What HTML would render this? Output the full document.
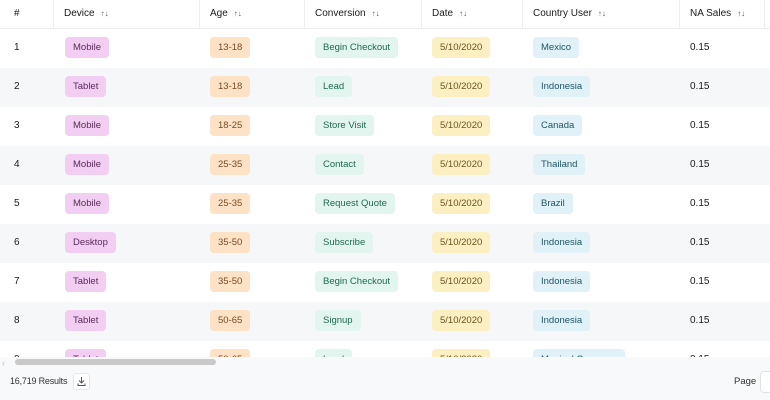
<!DOCTYPE html>
<html><head><style>
*{margin:0;padding:0;box-sizing:border-box}
body{width:770px;height:400px;overflow:hidden;background:#fff;font-family:"Liberation Sans",sans-serif;font-size:10px;color:#1a1a1a;position:relative}
.hd{position:absolute;top:0;left:0;width:770px;height:29px;border-bottom:1px solid #eceef0;background:#fff}
.hd div{position:absolute;top:0;height:28px;line-height:28px;border-right:1px solid #eceef0;padding-left:10px}
.hd span{color:#555;font-size:8px;margin-left:6px}
.row{position:absolute;left:0;width:770px;height:39px}
.row.alt{background:#f6f7f9}
.c{position:absolute;top:0;height:38px;line-height:38px}
.p{position:absolute;top:8px;height:21px;line-height:21px;padding:0 8px;border-radius:4px;font-size:9.5px;white-space:nowrap}
.dv{background:#f2cff2;color:#5b2a5b}
.ag{background:#fde2c6;color:#7a4a22}
.cv{background:#e2f5ee;color:#1f6a4f}
.dt{background:#fcefc2;color:#6a5320}
.ct{background:#e0f2f7;color:#1f5566}
.foot{position:absolute;left:0;top:357px;width:770px;height:43px;background:#f8f9fa}
</style></head><body>
<div class="hd">
<div style="left:0;width:54px;padding-left:14px">#</div>
<div style="left:54px;width:146px">Device<span>↑↓</span></div>
<div style="left:200px;width:105px">Age<span>↑↓</span></div>
<div style="left:305px;width:117px">Conversion<span>↑↓</span></div>
<div style="left:422px;width:101px">Date<span>↑↓</span></div>
<div style="left:523px;width:157px">Country User<span>↑↓</span></div>
<div style="left:680px;width:85px">NA Sales<span>↑↓</span></div>
</div>
<div id="rows"></div>
<script>
var d=[["Mobile","13-18","Begin Checkout","Mexico"],["Tablet","13-18","Lead","Indonesia"],["Mobile","18-25","Store Visit","Canada"],["Mobile","25-35","Contact","Thailand"],["Mobile","25-35","Request Quote","Brazil"],["Desktop","35-50","Subscribe","Indonesia"],["Tablet","35-50","Begin Checkout","Indonesia"],["Tablet","50-65","Signup","Indonesia"],["Tablet","50-65","Lead","Magical Company"]];
var h="";d.forEach(function(r,i){h+='<div class="row'+(i%2?' alt':'')+'" style="top:'+(29+39*i)+'px"><div class="c" style="left:14px">'+(i+1)+'</div><div class="p dv" style="left:65px">'+r[0]+'</div><div class="p ag" style="left:210px">'+r[1]+'</div><div class="p cv" style="left:315px">'+r[2]+'</div><div class="p dt" style="left:432px">5/10/2020</div><div class="p ct" style="left:533px">'+r[3]+'</div><div class="c" style="left:690px">0.15</div></div>';});
document.getElementById("rows").innerHTML=h;
</script>
<div class="foot">
<div style="position:absolute;left:2px;top:1px;color:#bbb;font-size:9px">‹</div>
<div style="position:absolute;left:15px;top:2px;width:201px;height:6px;border-radius:3px;background:#c9c9c9"></div>
<div style="position:absolute;left:10px;top:19px;font-size:9px;color:#333;letter-spacing:-0.2px">16,719 Results</div>
<div style="position:absolute;left:73px;top:16px;width:17px;height:17px;border:1px solid #e6e6e6;border-radius:3px;background:#fff">
<svg width="15" height="15" viewBox="0 0 15 15"><path d="M7.5 3v6M5 6.5l2.5 2.5 2.5-2.5M4 9.5v2h7v-2" stroke="#555" fill="none" stroke-width="1"/></svg></div>
<div style="position:absolute;left:734px;top:19px;font-size:9.5px;color:#333">Page</div>
<div style="position:absolute;left:760px;top:14px;width:20px;height:22px;border:1px solid #e2e2e2;border-radius:4px;background:#fff"></div>
</div>
</body></html>
